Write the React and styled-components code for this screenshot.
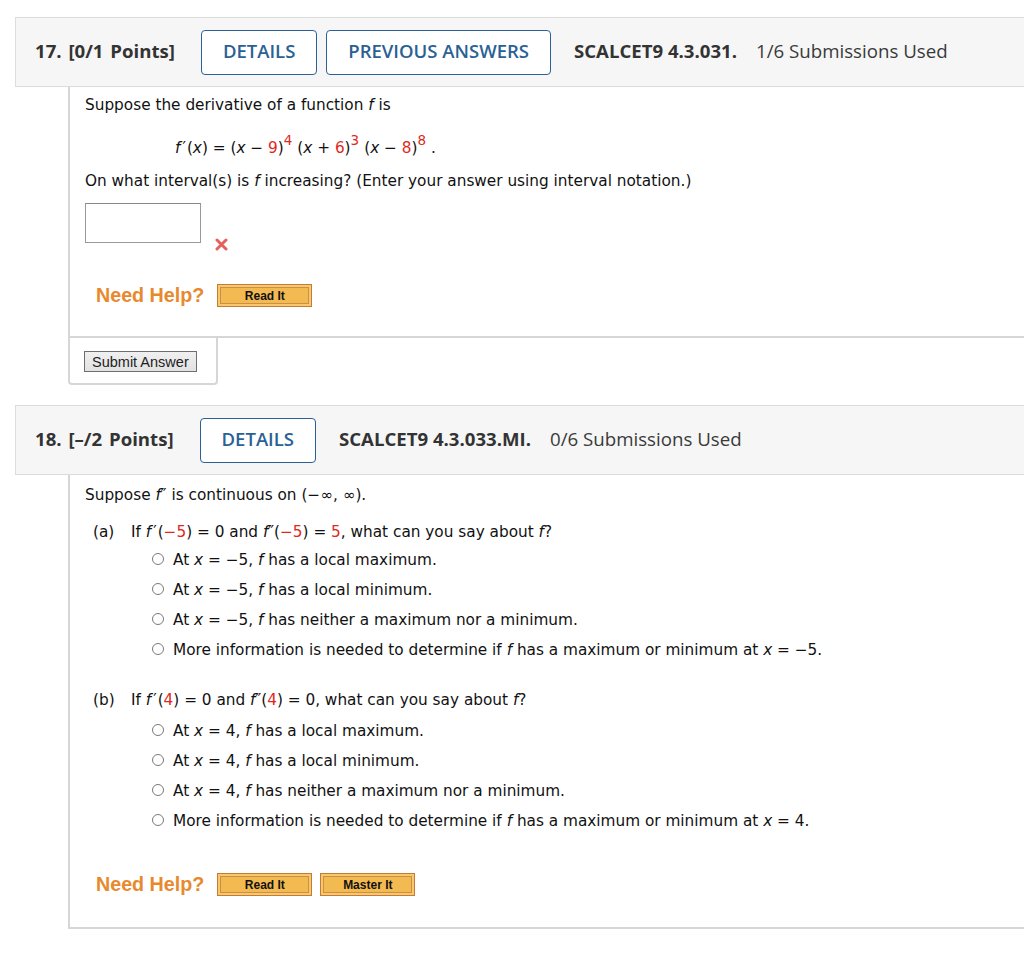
import styled, { createGlobalStyle } from "styled-components";

const Global = createGlobalStyle`
  body {
    margin: 0;
    background: #fff;
    overflow-x: hidden;
  }
`;

const Page = styled.div`
  padding: 17px 0 0 15px;
  width: 1100px;
`;

const Header = styled.div`
  display: flex;
  align-items: center;
  height: 68px;
  padding-left: 19px;
  background: #f6f6f6;
  border: 1px solid #dcdcdc;
  border-right: none;
  font-family: "Open Sans", sans-serif;
  color: #333;
`;

const Title = styled.div`
  font-size: 18.6px;
  font-weight: 700;
  margin-right: 26px;
  margin-bottom: 4px;
  word-spacing: 2px;
`;

const TabButton = styled.div`
  height: 45px;
  box-sizing: border-box;
  display: flex;
  align-items: center;
  padding: 0 21px 3px;
  border: 1px solid #2b6197;
  border-radius: 4px;
  color: #2a6194;
  font-size: 18.5px;
  font-weight: 600;
  margin-right: 9px;
  background: #fff;
`;

const Code = styled.div`
  font-size: 18.6px;
  font-weight: 700;
  margin-left: 14px;
  margin-right: 19px;
  margin-bottom: 4px;
`;

const Used = styled.div`
  font-size: 18.7px;
  color: #3a3a3a;
  margin-bottom: 4px;
`;

const Body = styled.div`
  margin-left: 53px;
  border-left: 2px solid #d6d6d6;
  border-bottom: 2px solid #d6d6d6;
  padding: ${(p) => p.$pad};
  font-family: "DejaVu Sans", Verdana, sans-serif;
  font-size: 15.3px;
  color: #111;
`;

const Line = styled.div`
  line-height: 20px;
  margin-top: ${(p) => p.$mt || 0}px;
  padding-left: ${(p) => p.$pl || 0}px;
  white-space: nowrap;
`;

const I = styled.i`
  font-style: italic;
`;

const Prime = styled.span`
  display: inline-block;
  margin: 0 1px 0 2px;
`;

const R = styled.span`
  color: #e0291d;
`;

const Sup = styled.sup`
  color: #e0291d;
  font-size: 13.5px;
  line-height: 0;
  vertical-align: 8px;
  margin-right: 5px;
`;

const AnswerRow = styled.div`
  display: flex;
  align-items: flex-end;
  margin-top: 12px;
`;

const Input = styled.div`
  width: 116px;
  height: 40px;
  box-sizing: border-box;
  border: 1px solid #999;
  border-top-color: #888;
`;

const Cross = styled.svg`
  margin-left: 14px;
  margin-bottom: -8px;
`;

const HelpRow = styled.div`
  display: flex;
  align-items: center;
  gap: 8px;
  padding-left: 11px;
  margin-top: ${(p) => p.$mt}px;
`;

const NeedHelp = styled.span`
  font-family: "Liberation Sans", Arial, sans-serif;
  font-weight: 700;
  font-size: 19.7px;
  color: #e8892e;
  margin-right: 5px;
`;

const HelpButton = styled.div`
  width: 95px;
  height: 23px;
  box-sizing: border-box;
  border: 1px solid #c87a34;
  background: #f4ba52;
  box-shadow: inset 0 0 0 2px #f7c86e, inset 0 0 0 3px #c99046;
  display: flex;
  align-items: center;
  justify-content: center;
  font-family: "Liberation Sans", Arial, sans-serif;
  font-weight: 700;
  font-size: 12px;
  color: #111;
`;

const SubmitBox = styled.div`
  margin-left: 53px;
  width: 150px;
  height: 47px;
  box-sizing: border-box;
  border: 2px solid #d6d6d6;
  border-top: none;
  border-radius: 0 0 4px 4px;
  padding: 13px 0 0 14px;
`;

const SubmitButton = styled.div`
  display: inline-flex;
  align-items: center;
  height: 21px;
  box-sizing: border-box;
  padding: 0 7px;
  border: 1px solid #6e6e6e;
  background: linear-gradient(#f0f0f0, #e2e2e2);
  font-family: "Liberation Sans", Arial, sans-serif;
  font-size: 14.5px;
  color: #222;
`;

const Gap = styled.div`
  height: ${(p) => p.$h}px;
`;

const Option = styled.div`
  display: flex;
  align-items: center;
  line-height: 20px;
  margin-top: ${(p) => p.$mt}px;
  padding-left: 67px;
  white-space: nowrap;
`;

const Radio = styled.span`
  flex: none;
  width: 12px;
  height: 12px;
  box-sizing: border-box;
  border: 1px solid #7a7a7a;
  border-radius: 50%;
  background: #fff;
  margin-right: 9px;
  margin-top: -3px;
`;

const PartLabel = styled.span`
  display: inline-block;
  width: 38px;
`;

const Part = ({ label, prompt, options, mt, first }) => (
  <>
    <Line $mt={mt} $pl={8}>
      <PartLabel>{label}</PartLabel>
      {prompt}
    </Line>
    {options.map((o, i) => (
      <Option key={i} $mt={i === 0 ? first : 10}>
        <Radio />
        <span>{o}</span>
      </Option>
    ))}
  </>
);

const optsA = [
  <>At <I>x</I> = −5, <I>f</I> has a local maximum.</>,
  <>At <I>x</I> = −5, <I>f</I> has a local minimum.</>,
  <>At <I>x</I> = −5, <I>f</I> has neither a maximum nor a minimum.</>,
  <>More information is needed to determine if <I>f</I> has a maximum or minimum at <I>x</I> = −5.</>,
];

const optsB = [
  <>At <I>x</I> = 4, <I>f</I> has a local maximum.</>,
  <>At <I>x</I> = 4, <I>f</I> has a local minimum.</>,
  <>At <I>x</I> = 4, <I>f</I> has neither a maximum nor a minimum.</>,
  <>More information is needed to determine if <I>f</I> has a maximum or minimum at <I>x</I> = 4.</>,
];

export default function App() {
  return (
    <Page>
      <Global />
      <Header>
        <Title>17. [0/1 Points]</Title>
        <TabButton>DETAILS</TabButton>
        <TabButton>PREVIOUS ANSWERS</TabButton>
        <Code>SCALCET9 4.3.031.</Code>
        <Used>1/6 Submissions Used</Used>
      </Header>
      <Body $pad="8px 0 29px 15px">
        <Line>
          Suppose the derivative of a function <I>f</I> is
        </Line>
        <Line $mt={23} $pl={90}>
          <I>f</I><Prime>′</Prime>(<I>x</I>) = (<I>x</I> − <R>9</R>)<Sup>4</Sup>(<I>x</I> + <R>6</R>)
          <Sup>3</Sup>(<I>x</I> − <R>8</R>)<Sup>8</Sup>.
        </Line>
        <Line $mt={13}>
          On what interval(s) is <I>f</I> increasing? (Enter your answer using interval notation.)
        </Line>
        <AnswerRow>
          <Input />
          <Cross width="13" height="13" viewBox="0 0 13 13">
            <path d="M2 2 L11 11 M11 2 L2 11" stroke="#e5615c" strokeWidth="3" strokeLinecap="round" />
          </Cross>
        </AnswerRow>
        <HelpRow $mt={41}>
          <NeedHelp>Need Help?</NeedHelp>
          <HelpButton>Read It</HelpButton>
        </HelpRow>
      </Body>
      <SubmitBox>
        <SubmitButton>Submit Answer</SubmitButton>
      </SubmitBox>
      <Gap $h={20} />
      <Header>
        <Title>18. [–/2 Points]</Title>
        <TabButton>DETAILS</TabButton>
        <Code>SCALCET9 4.3.033.MI.</Code>
        <Used>0/6 Submissions Used</Used>
      </Header>
      <Body $pad="10px 0 31px 15px">
        <Line>
          Suppose <I>f</I>″ is continuous on (−∞, ∞).
        </Line>
        <Part
          mt={17}
          first={8}
          label="(a)"
          prompt={
            <>
              If <I>f</I><Prime>′</Prime>(<R>−5</R>) = 0 and <I>f</I>″(<R>−5</R>) = <R>5</R>, what can you say about <I>f</I>?
            </>
          }
          options={optsA}
        />
        <Part
          mt={30}
          first={11}
          label="(b)"
          prompt={
            <>
              If <I>f</I><Prime>′</Prime>(<R>4</R>) = 0 and <I>f</I>″(<R>4</R>) = 0, what can you say about <I>f</I>?
            </>
          }
          options={optsB}
        />
        <HelpRow $mt={42}>
          <NeedHelp>Need Help?</NeedHelp>
          <HelpButton>Read It</HelpButton>
          <HelpButton>Master It</HelpButton>
        </HelpRow>
      </Body>
    </Page>
  );
}
